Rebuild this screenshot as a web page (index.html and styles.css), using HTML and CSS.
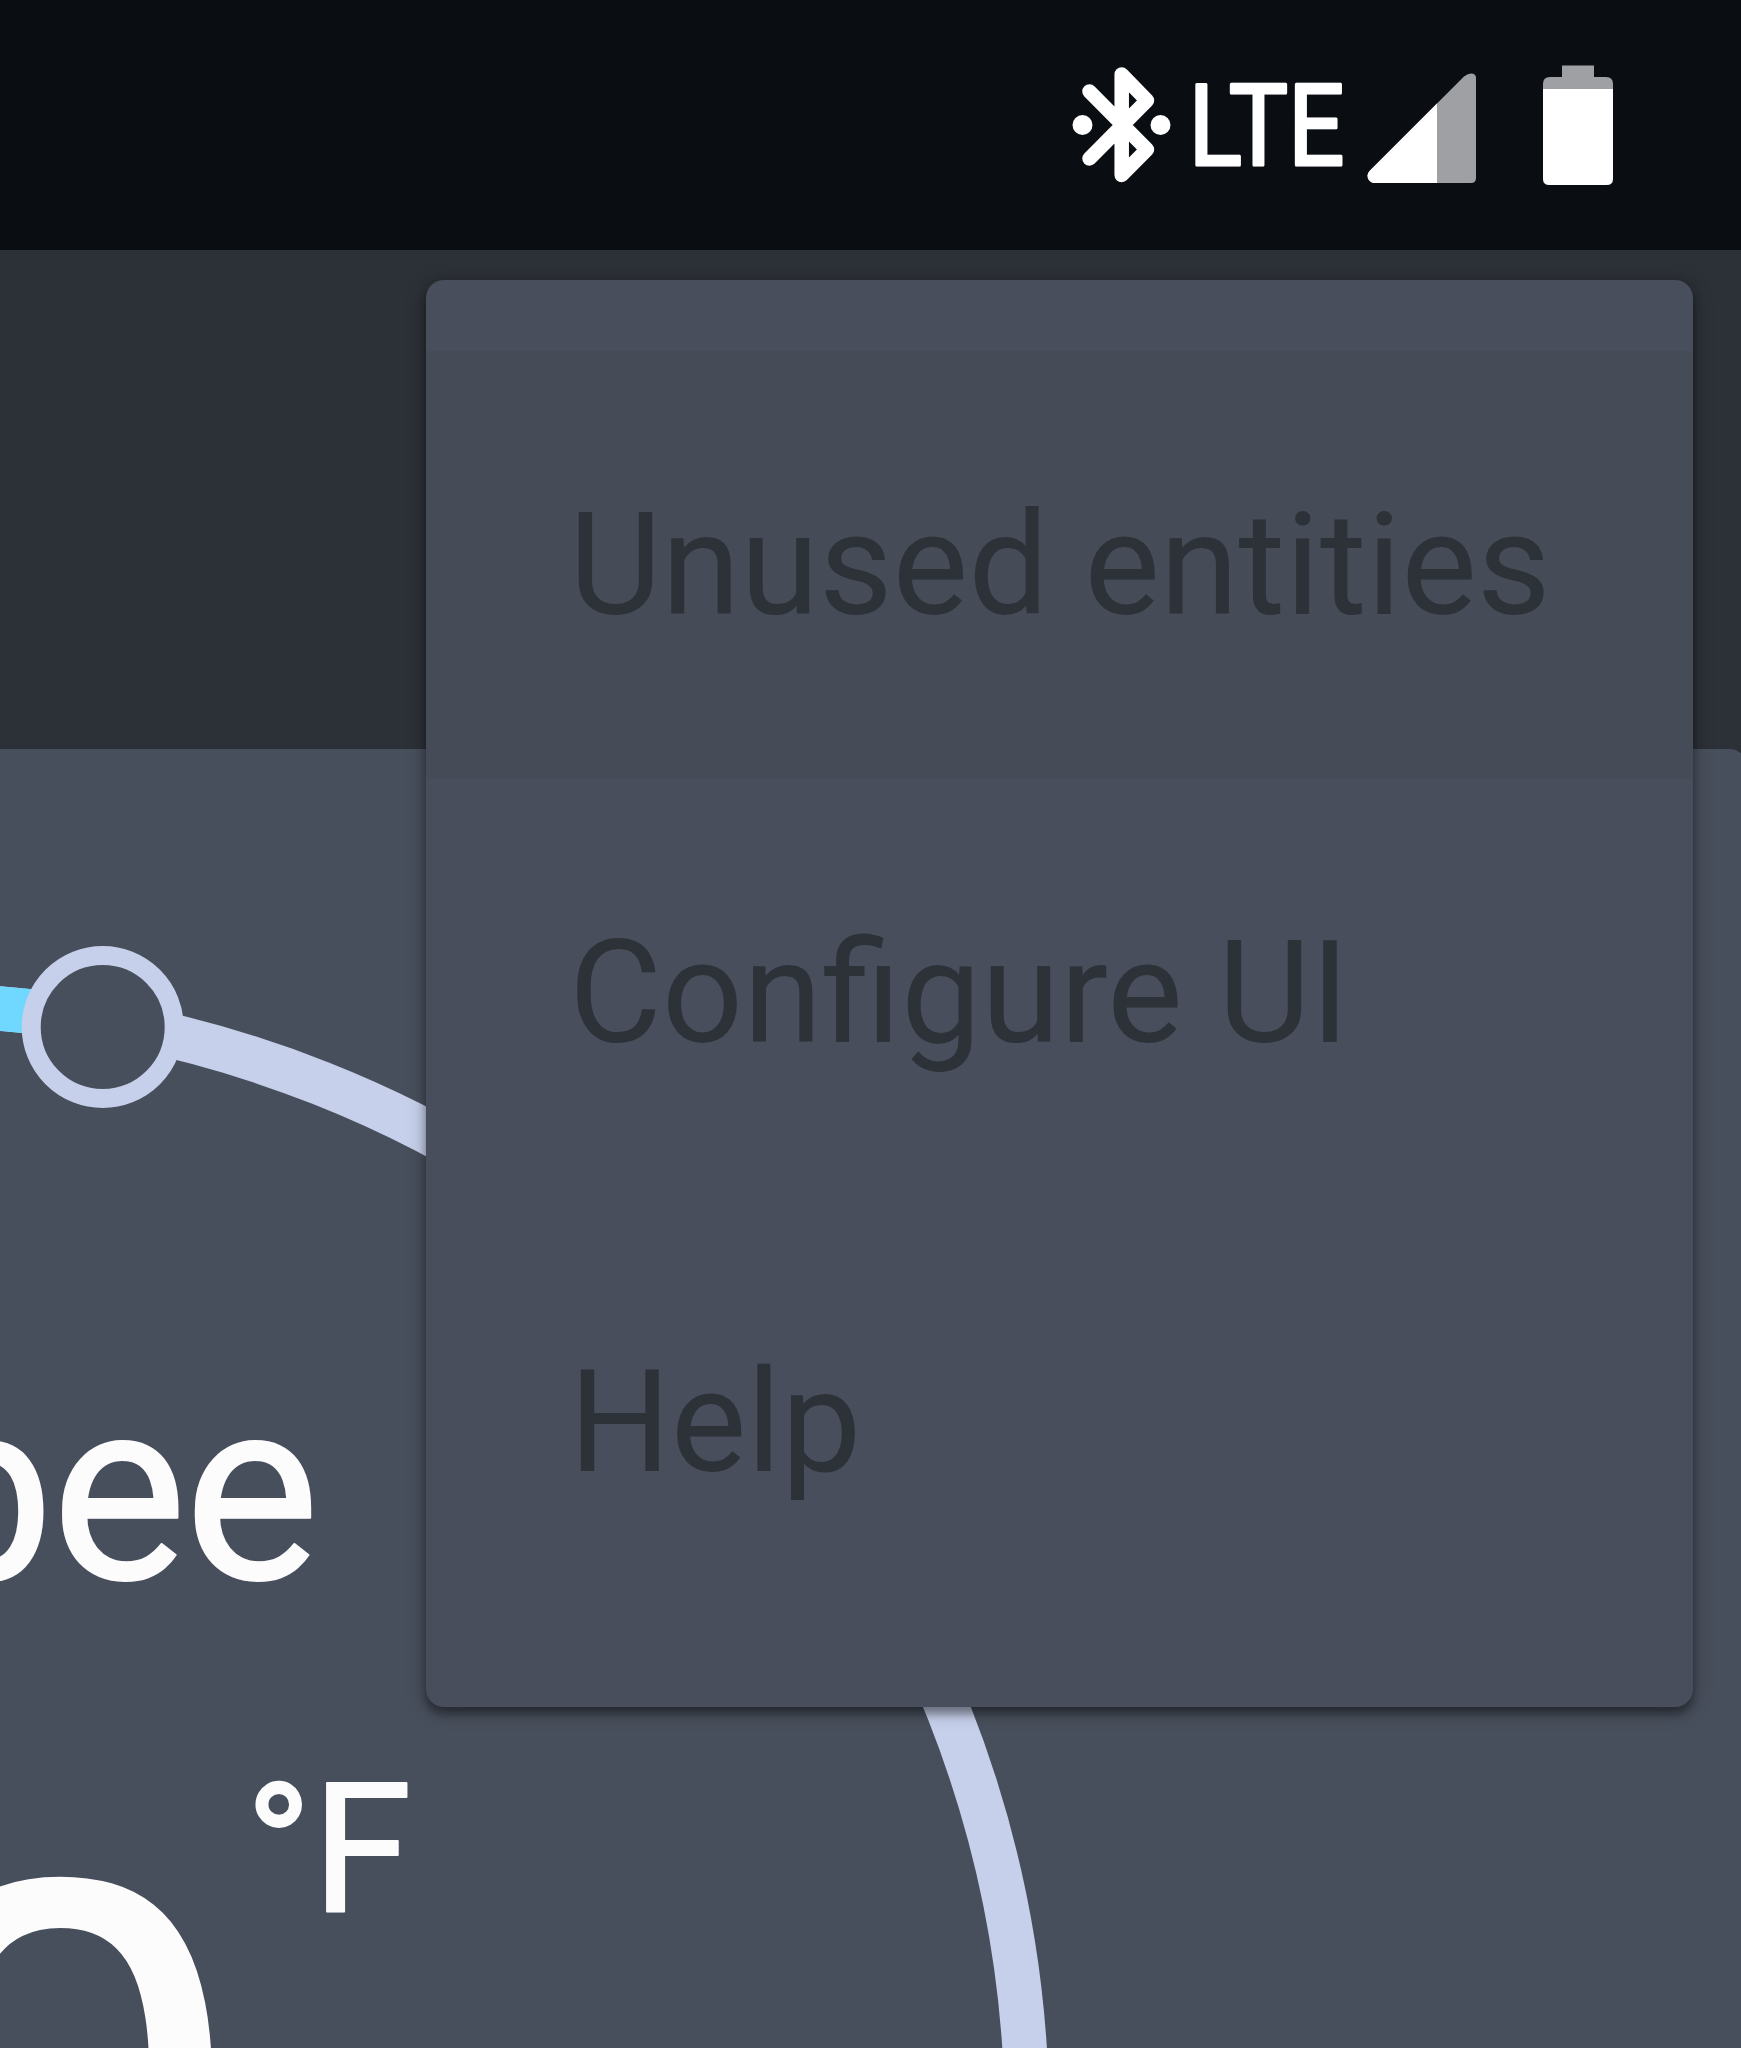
FILE: index.html
```html
<!DOCTYPE html>
<html lang="en">
<head>
  <meta charset="UTF-8">
  <meta name="viewport" content="width=device-width, initial-scale=1.0">
  <title>Home</title>
  <link rel="stylesheet" href="styles.css">
</head>
<body>
  <div class="screen">
    <div class="status-bar">
      <svg class="status-icons" width="560" height="250" viewBox="1060 0 560 250">
        <defs>
          <clipPath id="signalLevel">
            <rect x="1360" y="60" width="77" height="130"/>
          </clipPath>
        </defs>
        <!-- bluetooth -->
        <path class="bt-line" d="M1089.5 91.5L1147 149.5L1121.7 175V74.5L1147 100.5L1089.5 158.5"/>
        <circle class="white" cx="1082.5" cy="125" r="10"/>
        <circle class="white" cx="1160.5" cy="125" r="10"/>
        <text class="network" x="1188.5" y="165" textLength="156" lengthAdjust="spacingAndGlyphs">LTE</text>
        <!-- signal -->
        <path class="dim" d="M1471 183H1373Q1367.5 181 1367.5 175.5Q1367.5 173 1370 170.5L1464 76.5Q1468 73.5 1471 73.5Q1476 73.5 1476 78V178Q1476 183 1471 183Z"/>
        <path class="white" clip-path="url(#signalLevel)" d="M1471 183H1373Q1367.5 181 1367.5 175.5Q1367.5 173 1370 170.5L1464 76.5Q1468 73.5 1471 73.5Q1476 73.5 1476 78V178Q1476 183 1471 183Z"/>
        <!-- battery -->
        <path class="dim" d="M1543 90V84Q1543 77 1550 77H1562V65.5H1594V77H1606Q1613 77 1613 84V90Z"/>
        <path class="white" d="M1543 89H1613V179Q1613 185 1606.5 185H1549.5Q1543 185 1543 179Z"/>
      </svg>
    </div>

    <div class="toolbar"></div>

    <div class="card">
      <svg class="dial" width="1741" height="1300" viewBox="0 748.5 1741 1300">
        <circle class="track" cx="-90" cy="2121.5" r="1117"/>
        <path class="active" d="M-90 1004.5A1117 1117 0 0 1 102.7 1021.2"/>
        <circle class="handle" cx="102.7" cy="1026.5" r="71.5"/>
        <text class="name" x="317" y="1578">Ecobee</text>
        <text class="temp" x="249" y="2360">70</text>
        <text class="unit" x="245" y="1911.5">°F</text>
      </svg>
    </div>

    <ul class="menu">
      <li class="menu-item selected">Unused entities</li>
      <li class="menu-item">Configure UI</li>
      <li class="menu-item">Help</li>
    </ul>
  </div>
</body>
</html>
```

FILE: styles.css
```css
body {
  margin: 0;
  font-family: Roboto, sans-serif;
  background-color: #2c3037;
}

.screen {
  position: relative;
  width: 1741px;
  height: 2048px;
  overflow: hidden;
}

.status-bar {
  display: flex;
  justify-content: flex-end;
  height: 250px;
  padding-right: 121px;
  background-color: #0a0e13;
}

.white {
  fill: #fff;
}

.dim {
  fill: #9fa0a4;
}

.bt-line {
  fill: none;
  stroke: #fff;
  stroke-width: 14.5;
  stroke-linecap: round;
  stroke-linejoin: round;
}

.network {
  fill: #fff;
  stroke: #fff;
  stroke-width: 3;
  stroke-linejoin: round;
  font-size: 113.5px;
}

.toolbar {
  height: 498.5px;
  background-color: #2c3037;
}

.card {
  width: 1747px;
  height: 1320px;
  border-radius: 0 18px 0 0;
  background-color: #484f5c;
}

.dial {
  display: block;
}

.track,
.active {
  fill: none;
  stroke: #c6d0ea;
  stroke-width: 44.5;
}

.active {
  stroke: #70d8ff;
}

.handle {
  fill: #484f5c;
  stroke: #c6d0ea;
  stroke-width: 19;
}

.name,
.temp,
.unit {
  fill: #fcfcfc;
  stroke: #fcfcfc;
  stroke-width: 2;
  stroke-linejoin: round;
}

.name {
  font-size: 255px;
  letter-spacing: -2.5px;
  text-anchor: end;
}

.temp {
  font-size: 670px;
  text-anchor: end;
}

.unit {
  font-size: 180px;
}

/* dropdown */
.menu {
  position: absolute;
  top: 280px;
  right: 48px;
  width: 1267px;
  margin: 0;
  padding: 71px 0;
  box-sizing: border-box;
  list-style: none;
  border-radius: 18px;
  background-color: #484e5c;
  box-shadow: 0 7px 8px rgba(0, 0, 0, 0.35), 0 3px 20px rgba(0, 0, 0, 0.25);
}

.menu-item {
  height: 428.3px;
  padding: 0 143px;
  line-height: 430px;
  font-size: 142.7px;
  white-space: nowrap;
  color: #2d3138;
}

.selected {
  background-color: #464c57;
}
```
